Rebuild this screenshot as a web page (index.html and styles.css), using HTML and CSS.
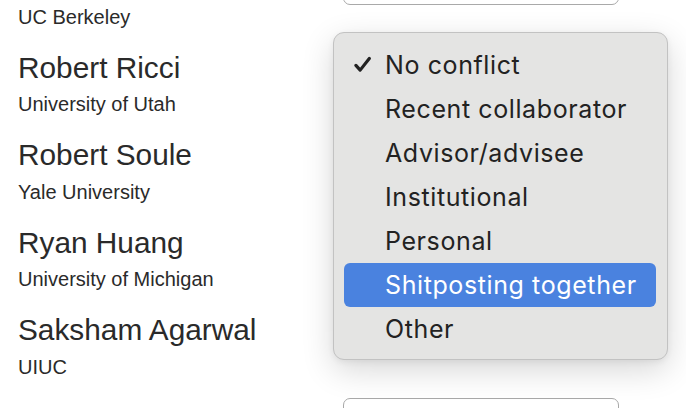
FILE: index.html
```html
<!DOCTYPE html>
<html>
<head>
<meta charset="utf-8">
<link rel="stylesheet" href="styles.css">
</head>
<body>
<div class="page">
  <ul class="list">
    <li class="row"><div class="person"><div class="name">Raluca Ada Popa</div><div class="inst">UC Berkeley</div></div><div class="sel"></div></li>
    <li class="row"><div class="person"><div class="name">Robert Ricci</div><div class="inst">University of Utah</div></div><div class="sel"></div></li>
    <li class="row"><div class="person"><div class="name">Robert Soule</div><div class="inst">Yale University</div></div><div class="sel"></div></li>
    <li class="row"><div class="person"><div class="name">Ryan Huang</div><div class="inst">University of Michigan</div></div><div class="sel"></div></li>
    <li class="row"><div class="person"><div class="name">Saksham Agarwal</div><div class="inst">UIUC</div></div><div class="sel"></div></li>
    <li class="row"><div class="person"><div class="name">Sam Kumar</div><div class="inst">UC Berkeley</div></div><div class="sel"></div></li>
  </ul>
  <div class="menu">
    <div class="item checked"><svg class="check" viewBox="0 0 16 16" width="17" height="17"><path d="M1.8 8.8 L5.8 13.3 L14.4 2.4" fill="none" stroke="#222" stroke-width="3" stroke-linecap="round" stroke-linejoin="round"/></svg>No conflict</div>
    <div class="item">Recent collaborator</div>
    <div class="item">Advisor/advisee</div>
    <div class="item">Institutional</div>
    <div class="item">Personal</div>
    <div class="item active">Shitposting together</div>
    <div class="item">Other</div>
  </div>
</div>
</body>
</html>
```

FILE: styles.css
```css
html, body {
  margin: 0;
  padding: 0;
  background: #ffffff;
  overflow: hidden;
}
.page {
  position: relative;
  width: 686px;
  height: 408px;
  overflow: hidden;
}
.list {
  list-style: none;
  margin: -36.6px 0 0 0;
  padding: 0 0 0 18px;
}
.row {
  display: grid;
  grid-template-columns: 325px 276px;
  height: 87.5px;
}
.person {
  font-family: "Liberation Sans", Arial, sans-serif;
  color: #2a2a2a;
}
.name {
  font-size: 29.8px;
  line-height: 34px;
}
.inst {
  font-size: 20px;
  line-height: 24px;
  margin-top: 7.5px;
}
.sel {
  margin-top: -3px;
  height: 45px;
  box-sizing: border-box;
  border: 1.5px solid #a9a9a9;
  border-radius: 7px;
  background: #ffffff;
}
.menu {
  position: absolute;
  left: 333px;
  top: 32px;
  width: 335px;
  height: 328px;
  box-sizing: border-box;
  border: 1px solid #c2c2c2;
  border-radius: 11px;
  background: #e4e4e3;
  padding: 10px 11px 8px 10px;
  box-shadow: 0 10px 32px rgba(0, 0, 0, 0.16), 0 2px 6px rgba(0, 0, 0, 0.06);
  font-family: "Inter", "Liberation Sans", sans-serif;
  font-size: 25px;
  letter-spacing: 0.6px;
  color: #222222;
}
.item {
  position: relative;
  height: 44px;
  line-height: 44px;
  padding-left: 41px;
  border-radius: 6px;
  white-space: nowrap;
}
.item.active {
  background: #4a82df;
  color: #ffffff;
}
.check {
  position: absolute;
  left: 10px;
  top: 13px;
}
```
